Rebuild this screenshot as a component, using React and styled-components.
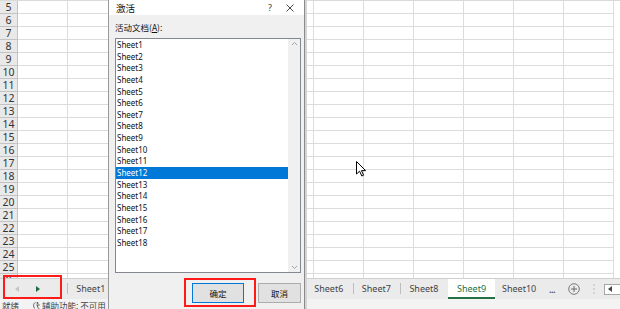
import React from 'react';
import styled, { createGlobalStyle } from 'styled-components';

const Global = createGlobalStyle`
  html, body { margin: 0; padding: 0; background: #fff; }
  body { font-family: "Noto Sans", "Noto Sans CJK SC", sans-serif; }
  * { box-sizing: border-box; }
`;

const Screen = styled.div`
  position: relative;
  width: 620px;
  height: 309px;
  overflow: hidden;
  display: flex;
  flex-direction: column;
  background: #fff;
`;

const Sheet = styled.div`
  flex: none;
  height: 278px;
  overflow: hidden;
  border-top: 1px solid #dadada;
`;

const Row = styled.div`
  display: flex;
  height: 13px;
`;

const RowHead = styled.div`
  flex: none;
  width: 18px;
  height: 13px;
  background: #e9e9e9;
  border-right: 1px solid #c3c3c3;
  border-bottom: 1px solid #c3c3c3;
  color: #333;
  font-family: "Noto Sans", sans-serif;
  font-size: 10.5px;
  line-height: 12px;
  text-align: center;
`;

const Cell = styled.div`
  flex: none;
  width: ${(p) => p.$w}px;
  height: 13px;
  border-right: 1px solid #dcdcdc;
  border-bottom: 1px solid #dcdcdc;
`;

const TabBar = styled.div`
  flex: none;
  height: 21px;
  display: flex;
  align-items: stretch;
  background: #ebebeb;
  border-top: 1px solid #cfcfcf;
`;

const Nav = styled.div`
  flex: none;
  width: 67px;
  display: flex;
  align-items: center;
  padding-left: 15px;
  gap: 17px;
`;

const TriLeft = styled.span`
  width: 0;
  height: 0;
  border-top: 3px solid transparent;
  border-bottom: 3px solid transparent;
  border-right: 4px solid ${(p) => p.$c};
`;

const TriRight = styled.span`
  width: 0;
  height: 0;
  border-top: 3px solid transparent;
  border-bottom: 3px solid transparent;
  border-left: 4px solid ${(p) => p.$c};
`;

const Tab = styled.div`
  position: relative;
  flex: none;
  width: 47.6px;
  display: flex;
  align-items: center;
  justify-content: center;
  font-size: 9px;
  color: ${(p) => (p.$active ? '#217346' : '#444')};
  background: ${(p) => (p.$active ? '#fff' : 'transparent')};
  border-bottom: 2px solid ${(p) => (p.$active ? '#217346' : 'transparent')};
  padding-top: 1px;
  &::before {
    content: '';
    display: ${(p) => (p.$sep ? 'block' : 'none')};
    position: absolute;
    left: 0;
    top: 4px;
    bottom: 3px;
    width: 1px;
    background: #bdbdbd;
  }
`;

const More = styled.div`
  flex: none;
  margin-left: 6px;
  width: 10px;
  display: flex;
  align-items: center;
  font-size: 9px;
  font-weight: 700;
  color: #555;
  letter-spacing: -0.5px;
`;

const IconSlot = styled.div`
  flex: none;
  display: flex;
  align-items: center;
  margin-left: ${(p) => p.$ml}px;
`;

const ScrollStart = styled.div`
  flex: none;
  margin-left: 9px;
  align-self: center;
  width: 24px;
  height: 11px;
  background: #fff;
  border: 1px solid #a6a6a6;
  display: flex;
  align-items: center;
  padding-left: 3px;
`;

const StatusBar = styled.div`
  flex: none;
  height: 20px;
  background: #f3f3f3;
  display: flex;
  align-items: flex-start;
  padding: 1px 0 0 2px;
  font-family: "Noto Sans CJK SC", sans-serif;
  font-size: 8.5px;
  line-height: 11px;
  color: #444;
`;

const StatusItem = styled.span`
  display: flex;
  align-items: center;
  gap: 1px;
  margin-left: ${(p) => p.$ml || 0}px;
`;

const Dialog = styled.div`
  position: absolute;
  left: 108px;
  top: 0;
  width: 197px;
  height: 330px;
  background: #f0f0f0;
  border-left: 1px solid #9a9a9a;
  border-right: 1px solid #8a8a8a;
  box-shadow: 2px 0 0 #d4d4d4;
  display: flex;
  flex-direction: column;
  font-family: "Noto Sans CJK SC", sans-serif;
`;

const TitleBar = styled.div`
  flex: none;
  height: 15px;
  background: #fff;
  display: flex;
  align-items: center;
  padding-left: 7px;
  font-size: 9.5px;
  color: #111;
`;

const TitleControls = styled.div`
  margin-left: auto;
  display: flex;
  align-items: center;
  gap: 14px;
  padding-right: 10px;
  color: #333;
  font-family: "Noto Sans", sans-serif;
  font-size: 9px;
`;

const Body = styled.div`
  flex: 1;
  display: flex;
  flex-direction: column;
  padding: 6px 3px 0 6px;
`;

const Label = styled.div`
  height: 12px;
  line-height: 12px;
  font-size: 8.5px;
  color: #111;
  margin-bottom: 5px;
`;

const ListBox = styled.div`
  flex: none;
  height: 235px;
  background: #fff;
  border: 1px solid #828790;
  display: flex;
`;

const Items = styled.div`
  flex: 1;
  display: flex;
  flex-direction: column;
`;

const Item = styled.div`
  height: 11.65px;
  line-height: 11.65px;
  padding-left: 1px;
  font-family: "Noto Sans", sans-serif;
  font-size: 8px;
  color: ${(p) => (p.$sel ? '#fff' : '#111')};
  background: ${(p) => (p.$sel ? '#0078d7' : 'transparent')};
`;

const ScrollTrack = styled.div`
  flex: none;
  width: 12px;
  background: #f0f0f0;
  display: flex;
  flex-direction: column;
  justify-content: space-between;
  align-items: center;
  padding: 2px 0 2px;
`;

const Buttons = styled.div`
  display: flex;
  justify-content: flex-end;
  gap: 14px;
  margin-top: 10px;
`;

const Button = styled.div`
  width: ${(p) => p.$w}px;
  height: 20px;
  background: #e1e1e1;
  border: 1px solid ${(p) => (p.$focus ? '#0078d7' : '#adadad')};
  display: flex;
  align-items: center;
  justify-content: center;
  font-size: 8.5px;
  color: #111;
`;

const RedBox = styled.div`
  position: absolute;
  left: ${(p) => p.$x}px;
  top: ${(p) => p.$y}px;
  width: ${(p) => p.$w}px;
  height: ${(p) => p.$h}px;
  border: 2px solid #ff1a1a;
  pointer-events: none;
`;

const Cursor = styled.svg`
  position: absolute;
  left: 356px;
  top: 161px;
`;

const colWidths = [50, 50, 50, 50, 50, 46, 50, 50, 50, 50, 50, 50];
const rows = Array.from({ length: 22 }, (_, i) => i + 5);
const sheets = Array.from({ length: 18 }, (_, i) => `Sheet${i + 1}`);
const tabs = Array.from({ length: 10 }, (_, i) => `Sheet${i + 1}`);

const Chevron = ({ up }) => (
  <svg width="7" height="5" viewBox="0 0 7 5">
    <path
      d={up ? 'M1 4 L3.5 1.5 L6 4' : 'M1 1 L3.5 3.5 L6 1'}
      fill="none"
      stroke="#a3a3a3"
      strokeWidth="1"
    />
  </svg>
);

export default function App() {
  return (
    <>
      <Global />
      <Screen>
        <Sheet>
          {rows.map((r) => (
            <Row key={r}>
              <RowHead>{r}</RowHead>
              {colWidths.map((w, i) => (
                <Cell key={i} $w={w} />
              ))}
            </Row>
          ))}
        </Sheet>
        <TabBar>
          <Nav>
            <TriLeft $c="#c4c4c4" />
            <TriRight $c="#1e6b41" />
          </Nav>
          {tabs.map((t, i) => {
            const n = i + 1;
            return (
              <Tab key={t} $active={n === 9} $sep={n !== 9 && n !== 10}>
                {t}
              </Tab>
            );
          })}
          <More>...</More>
          <IconSlot $ml={9}>
            <svg width="12" height="12" viewBox="0 0 12 12">
              <circle cx="6" cy="6" r="5.3" fill="none" stroke="#7a7a7a" strokeWidth="1" />
              <path d="M6 3 V9 M3 6 H9" stroke="#6a6a6a" strokeWidth="1" />
            </svg>
          </IconSlot>
          <IconSlot $ml={13}>
            <svg width="2" height="12" viewBox="0 0 2 12">
              <circle cx="1" cy="2" r="0.8" fill="#b5b5b5" />
              <circle cx="1" cy="6" r="0.8" fill="#b5b5b5" />
              <circle cx="1" cy="10" r="0.8" fill="#b5b5b5" />
            </svg>
          </IconSlot>
          <ScrollStart>
            <TriLeft $c="#444" />
          </ScrollStart>
        </TabBar>
        <StatusBar>
          <StatusItem>就绪</StatusItem>
          <StatusItem $ml={13}>
            <svg width="9" height="9" viewBox="0 0 9 9">
              <path d="M3.5 1.5 C1.2 2.2 0.8 6 3 7.6" fill="none" stroke="#555" strokeWidth="0.9" />
              <circle cx="5.5" cy="2" r="0.9" fill="#555" />
              <path d="M4.3 4 L7.8 4 M5.6 4 L5.6 6.5 L7.6 8" fill="none" stroke="#555" strokeWidth="0.9" />
            </svg>
            辅助功能: 不可用
          </StatusItem>
        </StatusBar>

        <Dialog>
          <TitleBar>
            激活
            <TitleControls>
              <span>?</span>
              <svg width="8" height="8" viewBox="0 0 8 8">
                <path d="M0.5 0.5 L7.5 7.5 M7.5 0.5 L0.5 7.5" stroke="#333" strokeWidth="0.9" />
              </svg>
            </TitleControls>
          </TitleBar>
          <Body>
            <Label>
              活动文档(<u>A</u>):
            </Label>
            <ListBox>
              <Items>
                {sheets.map((s) => (
                  <Item key={s} $sel={s === 'Sheet12'}>
                    {s}
                  </Item>
                ))}
              </Items>
              <ScrollTrack>
                <Chevron up />
                <Chevron />
              </ScrollTrack>
            </ListBox>
            <Buttons>
              <Button $w={52} $focus>
                确定
              </Button>
              <Button $w={43}>取消</Button>
            </Buttons>
          </Body>
        </Dialog>

        <RedBox $x={184} $y={278} $w={72} $h={29} />
        <RedBox $x={3} $y={275} $w={59} $h={24} />

        <Cursor width="11" height="17" viewBox="0 0 11 17">
          <path
            d="M0.5 0.5 L0.5 13 L3.6 10.2 L5.8 15 L7.6 14.2 L5.5 9.6 L9.6 9.6 Z"
            fill="#fff"
            stroke="#000"
            strokeWidth="1"
            strokeLinejoin="round"
          />
        </Cursor>
      </Screen>
    </>
  );
}
